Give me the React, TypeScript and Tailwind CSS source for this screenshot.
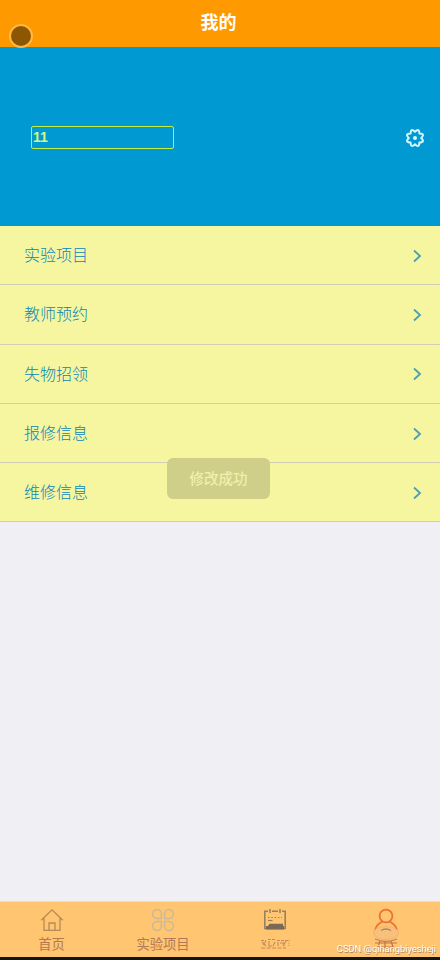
import React from 'react';

const MENU_ITEMS = ['实验项目', '教师预约', '失物招领', '报修信息', '维修信息'];

const GearIcon: React.FC = () => (
  <svg viewBox="0 0 20 20" className="w-5 h-5" fill="none" stroke="#d5f5fa" strokeWidth="2" strokeLinejoin="round">
    <path d="M16.2 10 Q20.5 14.3 14.4 14.4 Q14.3 20.5 10 16.2 Q5.7 20.5 5.6 14.4 Q-0.5 14.3 3.8 10 Q-0.5 5.7 5.6 5.6 Q5.7 -0.5 10 3.8 Q14.3 -0.5 14.4 5.6 Q20.5 5.7 16.2 10 Z" />
    <circle cx="10" cy="10" r="2" fill="#d5f5fa" stroke="none" />
  </svg>
);

const HomeIcon: React.FC = () => (
  <svg viewBox="0 0 24 24" className="w-6 h-6" fill="none" stroke="#b48a55" strokeWidth="1.3">
    <path d="M1.2 12.3 L12 1.8 L22.8 12.3" />
    <path d="M4 10 V22.3 H20 V10" />
    <path d="M9 22 V15 H15 V22" />
  </svg>
);

const CloverIcon: React.FC = () => (
  <svg viewBox="0 0 24 24" className="w-6 h-6" fill="none" stroke="#c9b999" strokeWidth="1.5">
    <path d="M10.4 10.4 H6 A4.4 4.4 0 1 1 10.4 6 Z" />
    <path d="M13.6 10.4 V6 A4.4 4.4 0 1 1 18 10.4 Z" />
    <path d="M10.4 13.6 V18 A4.4 4.4 0 1 1 6 13.6 Z" />
    <path d="M13.6 13.6 H18 A4.4 4.4 0 1 1 13.6 18 Z" />
  </svg>
);

const CalendarIcon: React.FC = () => (
  <svg viewBox="0 0 24 24" className="w-6 h-6" fill="none" stroke="#98815f" strokeWidth="1.6">
    <path d="M5 3.2 H1.8 V20.5 H22.2 V3.2 H19 M9 3.2 H15 M7 1 V5 M17 1 V5" />
    <path d="M5 9.5 H19" strokeDasharray="1.5 1.8" strokeWidth="1.2" />
    <path d="M5 12.5 H9.5" strokeWidth="1.2" />
    <path d="M3 21.5 V18 H5 L6.5 15.8 H20 V18 H21 V21.5 Z" fill="#7b6958" stroke="none" />
  </svg>
);

// Label of the third tab while it is fading between two states
const FadingLabel: React.FC = () => (
  <svg viewBox="0 0 34 12" className="w-[34px] h-3" fill="none" stroke="#c58a5b" strokeWidth="1.1">
    <path d="M3 2.5 H8 M10 1.5 H17 M19 2.5 H31" strokeDasharray="3 1" />
    <path d="M4 4 L8 8 M8 3 L5 7 M11 3 V8 H14 M17 4 L15 8 M20 4 V8 M22 5 H26 V8 M28 3 L25 8" />
    <path d="M3 10 H28" strokeDasharray="4 1.5" />
    <path d="M31 2 V8" strokeDasharray="1 1.5" />
  </svg>
);

const UserIcon: React.FC = () => (
  <svg viewBox="0 0 30 44" className="w-[30px] h-11" fill="none" stroke="#ed7136" strokeWidth="1.8">
    <circle cx="15" cy="8" r="6.4" />
    <path d="M11.5 13.5 C7 16 4.5 18 4 23 M18.5 13.5 C23 16 25.5 18 26 23" />
    <ellipse cx="15" cy="25" rx="12.5" ry="6.5" fill="#f9c07b" stroke="#efb471" strokeWidth="1" />
    <path d="M10 22.5 Q15 19.5 20 22.5" stroke="#a58a5e" strokeWidth="1.3" />
    <path d="M4 31 Q15 36 26 31" stroke="#c98654" strokeWidth="1.3" />
    <path d="M4 35 H26 M7 39 H23 M9 33 L7 39 M14 33 V40 M20 33 L22 39" stroke="#bf744d" strokeWidth="1.2" />
  </svg>
);

const App: React.FC = () => {
  return (
    <div className="relative flex flex-col w-[440px] h-[960px] overflow-hidden bg-[#f0eff3] font-['Liberation_Sans','Noto_Sans_CJK_SC',sans-serif]">
      {/* Header */}
      <header className="h-[47px] shrink-0 flex items-center justify-center bg-[#ff9900] pb-0.5 pr-[3px]">
        <h1 className="text-lg leading-none font-bold text-white">我的</h1>
      </header>
      <div className="absolute left-[9px] top-[24px] w-6 h-6 rounded-full border-2 border-[#ffb747] bg-[#8c5700]"></div>

      {/* Profile */}
      <section className="h-[179px] shrink-0 flex items-center justify-between bg-[#0099d2] pl-[31px] pr-[15px] pt-0.5">
        <div className="w-[143px] h-[23px] flex items-center border border-[#c4ee40] rounded-xs pl-px pb-0.5 text-sm font-bold text-[#d9f77c]">
          11
        </div>
        <GearIcon />
      </section>

      {/* Menu */}
      <ul className="shrink-0">
        {MENU_ITEMS.map((item) => (
          <li key={item} className="h-[59.3px] flex items-center justify-between border-b-[1.5px] border-[#d2ceb5] bg-[#f6f6a0] pl-6 pr-[18px] pt-px">
            <span className="pt-px text-base leading-none font-light text-[#0b86b4]">{item}</span>
            <svg viewBox="0 0 10 14" className="w-2.5 h-3.5" fill="none" stroke="#4ba0ae" strokeWidth="1.8">
              <path d="M2 1.5 L8 7 L2 12.5" />
            </svg>
          </li>
        ))}
      </ul>

      {/* Toast */}
      <div className="absolute left-[167px] top-[458px] w-[103px] h-[41px] flex items-center justify-center rounded-md bg-[#cfcf8a] text-[14.5px] font-medium text-[#eff0aa] pt-[3px]">
        修改成功
      </div>

      {/* Tab bar */}
      <nav className="mt-auto h-[59px] shrink-0 flex border-t border-b-[3px] border-t-[#ffdba2] border-b-[#151510] bg-[#ffc571] text-[13.3px] text-[#b17a54]">
        <div className="w-[103px] flex flex-col items-center pt-1.5">
          <HomeIcon />
          <span className="mt-1.5 leading-none">首页</span>
        </div>
        <div className="w-[120px] flex flex-col items-center pt-1.5">
          <CloverIcon />
          <span className="mt-1.5 leading-none">实验项目</span>
        </div>
        <div className="w-[103px] flex flex-col items-center pt-1.5">
          <CalendarIcon />
          <span className="mt-1.5"><FadingLabel /></span>
        </div>
        <div className="flex-1 flex flex-col items-center pt-1.5 pl-1.5">
          <UserIcon />
        </div>
      </nav>
      <div className="absolute right-[4px] bottom-[7px] font-['Roboto',sans-serif] text-[9.5px] leading-none tracking-[-0.1px] text-white [text-shadow:0.5px_0.5px_0_#a98660]">CSDN @qihangbiyesheji</div>
    </div>
  );
};

export default App;
